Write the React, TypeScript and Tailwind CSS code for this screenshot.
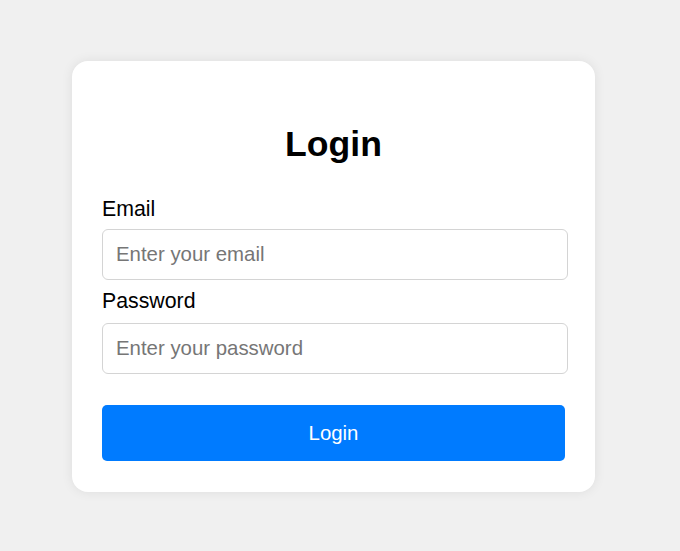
export default function App() {
  return (
    <div className="min-h-[551px] w-[680px] bg-[#f0f0f0] pt-[61px] font-['Liberation_Sans',Arial,sans-serif]">
      <div className="ml-[72px] w-[523px] rounded-[16px] bg-white px-[30px] pt-[63px] pb-[31px] shadow-[0_0_12px_rgba(0,0,0,0.08)]">
        <h2 className="mb-[33px] text-center text-[35.6px] leading-[40px] font-bold text-black">Login</h2>

        <form className="flex flex-col" onSubmit={(e) => e.preventDefault()}>
          <label htmlFor="email" className="text-[21.3px] leading-[24px] text-black">
            Email
          </label>
          <input
            id="email"
            type="email"
            placeholder="Enter your email"
            className="mt-[8px] h-[51px] w-[466px] rounded-[6px] border border-[#d4d4d4] px-[13px] text-[20.4px] text-black outline-none placeholder:text-[#767676]"
          />

          <label htmlFor="password" className="mt-[9px] text-[21.3px] leading-[24px] text-black">
            Password
          </label>
          <input
            id="password"
            type="password"
            placeholder="Enter your password"
            className="mt-[10px] h-[51px] w-[466px] rounded-[6px] border border-[#d4d4d4] px-[13px] text-[20.4px] text-black outline-none placeholder:text-[#767676]"
          />

          <button
            type="submit"
            className="mt-[31px] h-[56px] w-full rounded-[5px] bg-[#007bff] text-[20.4px] text-white"
          >
            Login
          </button>
        </form>
      </div>
    </div>
  )
}
